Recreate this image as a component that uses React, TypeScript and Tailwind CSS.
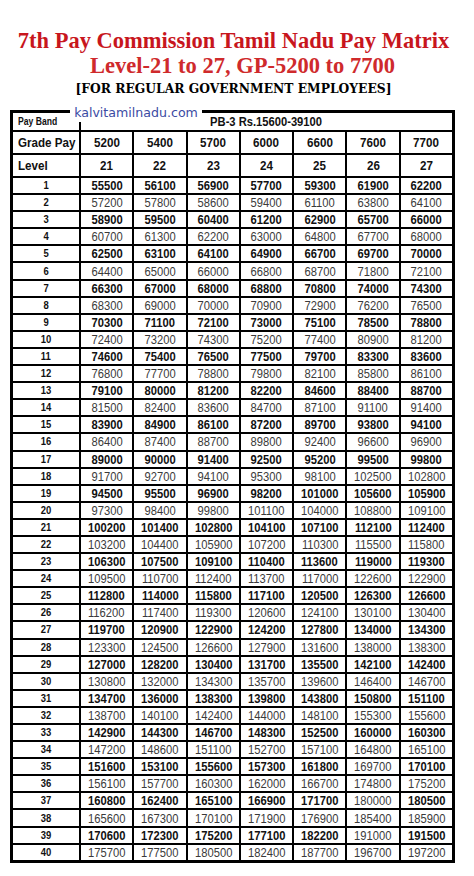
import React from "react";

const data: number[][] = [
  [55500, 56100, 56900, 57700, 59300, 61900, 62200],
  [57200, 57800, 58600, 59400, 61100, 63800, 64100],
  [58900, 59500, 60400, 61200, 62900, 65700, 66000],
  [60700, 61300, 62200, 63000, 64800, 67700, 68000],
  [62500, 63100, 64100, 64900, 66700, 69700, 70000],
  [64400, 65000, 66000, 66800, 68700, 71800, 72100],
  [66300, 67000, 68000, 68800, 70800, 74000, 74300],
  [68300, 69000, 70000, 70900, 72900, 76200, 76500],
  [70300, 71100, 72100, 73000, 75100, 78500, 78800],
  [72400, 73200, 74300, 75200, 77400, 80900, 81200],
  [74600, 75400, 76500, 77500, 79700, 83300, 83600],
  [76800, 77700, 78800, 79800, 82100, 85800, 86100],
  [79100, 80000, 81200, 82200, 84600, 88400, 88700],
  [81500, 82400, 83600, 84700, 87100, 91100, 91400],
  [83900, 84900, 86100, 87200, 89700, 93800, 94100],
  [86400, 87400, 88700, 89800, 92400, 96600, 96900],
  [89000, 90000, 91400, 92500, 95200, 99500, 99800],
  [91700, 92700, 94100, 95300, 98100, 102500, 102800],
  [94500, 95500, 96900, 98200, 101000, 105600, 105900],
  [97300, 98400, 99800, 101100, 104000, 108800, 109100],
  [100200, 101400, 102800, 104100, 107100, 112100, 112400],
  [103200, 104400, 105900, 107200, 110300, 115500, 115800],
  [106300, 107500, 109100, 110400, 113600, 119000, 119300],
  [109500, 110700, 112400, 113700, 117000, 122600, 122900],
  [112800, 114000, 115800, 117100, 120500, 126300, 126600],
  [116200, 117400, 119300, 120600, 124100, 130100, 130400],
  [119700, 120900, 122900, 124200, 127800, 134000, 134300],
  [123300, 124500, 126600, 127900, 131600, 138000, 138300],
  [127000, 128200, 130400, 131700, 135500, 142100, 142400],
  [130800, 132000, 134300, 135700, 139600, 146400, 146700],
  [134700, 136000, 138300, 139800, 143800, 150800, 151100],
  [138700, 140100, 142400, 144000, 148100, 155300, 155600],
  [142900, 144300, 146700, 148300, 152500, 160000, 160300],
  [147200, 148600, 151100, 152700, 157100, 164800, 165100],
  [151600, 153100, 155600, 157300, 161800, 169700, 170100],
  [156100, 157700, 160300, 162000, 166700, 174800, 175200],
  [160800, 162400, 165100, 166900, 171700, 180000, 180500],
  [165600, 167300, 170100, 171900, 176900, 185400, 185900],
  [170600, 172300, 175200, 177100, 182200, 191000, 191500],
  [175700, 177500, 180500, 182400, 187700, 196700, 197200],
];

const gradePay = [5200, 5400, 5700, 6000, 6600, 7600, 7700];
const levels = [21, 22, 23, 24, 25, 26, 27];
const notBold = new Set(["35-5", "37-5", "39-5"]);

function T({ children, className = "" }: { children: React.ReactNode; className?: string }) {
  return (
    <span className={`inline-block whitespace-nowrap scale-x-[0.86] ${className}`}>{children}</span>
  );
}

export default function App() {
  return (
    <div className="min-h-[876px] bg-white">
      <div className="w-[467px] pt-[28px] text-center font-['Liberation_Serif','Times_New_Roman',serif] font-bold">
        <div className="text-[22.5px] leading-[25px] text-[#c8161d] whitespace-nowrap">
          7th Pay Commission Tamil Nadu Pay Matrix
        </div>
        <div className="pl-[18px] text-[22.5px] leading-[25px] text-[#cf2a2c] whitespace-nowrap">
          Level-21 to 27, GP-5200 to 7700
        </div>
        <div className="mt-[3.5px] text-[12.3px] leading-[14px] text-black whitespace-nowrap font-['DejaVu_Serif',serif]">
          [FOR REGULAR GOVERNMENT EMPLOYEES]
        </div>
      </div>

      <div className="relative ml-[10px] mt-[14.5px] w-[445px] bg-black p-[3px] grid grid-cols-[66px_repeat(7,1fr)] grid-rows-[17px_21px_21px_repeat(40,15.1px)] gap-[2px] font-['Liberation_Sans',Arial,sans-serif] font-bold text-[#111]">
        <span className="absolute left-[60px] top-[-6px] h-[18px] w-[132px] bg-white text-center text-[12.6px] leading-[18px] font-normal text-[#3b4ba3] font-['DejaVu_Sans',sans-serif]">
          kalvitamilnadu.com
        </span>

        <div className="bg-white flex items-center pl-[5px]">
          <T className="origin-left text-[10px] leading-none">Pay Band</T>
        </div>
        <div className="col-span-7 bg-white flex items-center justify-center">
          <T className="text-[13px] leading-none">PB-3 Rs.15600-39100</T>
        </div>

        <div className="bg-white flex items-center pl-[5px]">
          <T className="origin-left text-[13.5px] leading-none">Grade Pay</T>
        </div>
        {gradePay.map((g) => (
          <div key={g} className="bg-white flex items-center justify-center">
            <T className="text-[13.5px] leading-none">{g}</T>
          </div>
        ))}

        <div className="bg-white flex items-center pl-[5px]">
          <T className="origin-left text-[13.5px] leading-none">Level</T>
        </div>
        {levels.map((l) => (
          <div key={l} className="bg-white flex items-center justify-center">
            <T className="text-[13.5px] leading-none">{l}</T>
          </div>
        ))}

        {data.map((row, ri) => {
          const idx = ri + 1;
          const oddRow = idx % 2 === 1;
          return (
            <React.Fragment key={idx}>
              <div className="bg-white flex items-center justify-center">
                <T className="text-[11px] leading-none font-bold">{idx}</T>
              </div>
              {row.map((v, ci) => {
                const bold = oddRow && !notBold.has(`${idx}-${ci}`);
                return (
                  <div key={ci} className="bg-white flex items-center justify-center">
                    <T
                      className={`text-[13px] leading-none ${
                        bold ? "font-bold text-[#111]" : "font-normal text-[#3a3a3a]"
                      }`}
                    >
                      {v}
                    </T>
                  </div>
                );
              })}
            </React.Fragment>
          );
        })}
      </div>
    </div>
  );
}
